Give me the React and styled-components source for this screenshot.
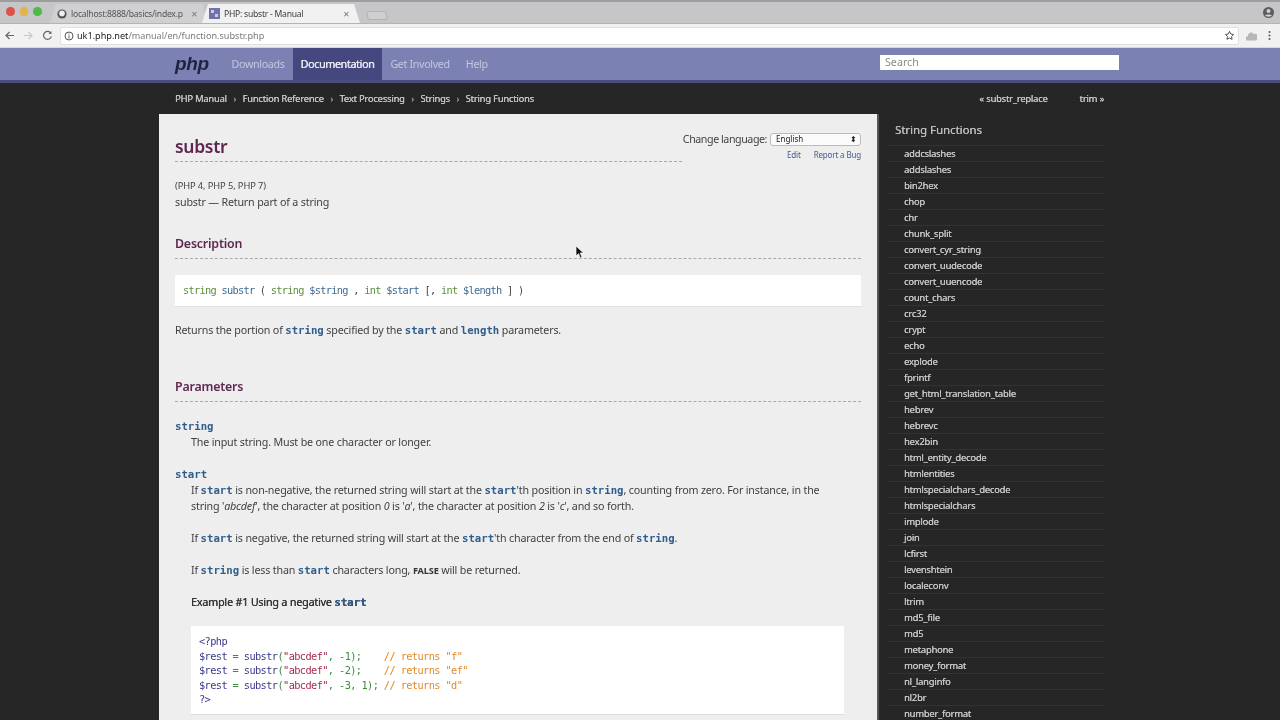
import React from "react";
import styled, { createGlobalStyle } from "styled-components";

const Global = createGlobalStyle`
  html, body { margin: 0; padding: 0; background: #262626; }
  body { width: 1280px; height: 720px; overflow: hidden; font-family: "Noto Sans", "Open Sans", sans-serif; }
  * { box-sizing: border-box; }
`;

const Page = styled.div`
  position: relative;
  width: 1280px;
  height: 720px;
  overflow: hidden;
  background: #262626;
  font-size: 10.7px;
  letter-spacing: -0.17px;
  filter: blur(0.35px);
`;

const TabStrip = styled.div`
  height: 24px;
  border-top: 2px solid #9d9da0;
  background: #c6c6c9;
  display: flex;
  align-items: flex-end;
  padding-left: 50px;
  border-bottom: 1px solid #b4b4b6;
`;
const Lights = styled.div`
  display: flex;
  gap: 5px;
  position: absolute;
  left: 6px;
  top: 7px;
  z-index: 3;
`;
const Light = styled.span`
  width: 8.500px;
  height: 8.500px;
  border-radius: 50%;
  background: ${(p) => p.$c};
`;
const Tab = styled.div`
  width: 158px;
  height: 19px;
  margin-right: -6px;
  padding: 0 10px 0 7px;
  display: flex;
  align-items: center;
  gap: 4px;
  font-size: 8.6px;
  letter-spacing: -0.25px;
  color: ${(p) => (p.$active ? "#3c3c3e" : "#555558")};
  background: ${(p) => (p.$active ? "#f1f1f2" : "#d0d0d2")};
  clip-path: polygon(0 100%, 6px 0, calc(100% - 6px) 0, 100% 100%);
  z-index: ${(p) => (p.$active ? 2 : 1)};
  white-space: nowrap;
  overflow: hidden;
`;
const TabTitle = styled.span`
  flex: 1;
  overflow: hidden;
`;
const TabClose = styled.span`
  font-size: 8px;
  color: #77777a;
`;
const NewTab = styled.div`
  width: 20px;
  height: 9px;
  margin: 0 0 3px 13px;
  background: #cfcfd1;
  border: 1px solid #b2b2b4;
  border-radius: 2px;
  transform: skewX(10deg);
`;
const Avatar = styled.div`
  margin-left: auto;
  margin-right: 6px;
  margin-bottom: 5px;
  display: flex;
`;

const Toolbar = styled.div`
  height: 24px;
  background: #f1f1f2;
  display: flex;
  align-items: center;
  padding: 0 9px 0 4px;
  border-bottom: 1px solid #d8d8da;
`;
const NavIcons = styled.div`
  display: flex;
  gap: 8px;
  margin-right: 7px;
`;
const Address = styled.div`
  flex: 1;
  height: 18px;
  background: #fff;
  border: 1px solid #e0e0e2;
  border-radius: 2px;
  display: flex;
  align-items: center;
  padding: 0 3px 0 3px;
  font-size: 9.1px;
  letter-spacing: 0;
  color: #7c7c7e;
  gap: 3px;
`;
const Host = styled.span`
  color: #242424;
`;
const AddressEnd = styled.span`
  margin-left: auto;
  display: flex;
`;
const ToolEnd = styled.div`
  display: flex;
  align-items: center;
  gap: 11px;
  margin-left: 7px;
`;

const NavBar = styled.nav`
  height: 35px;
  background: #7b82b3;
  border-bottom: 3px solid #4a4c80;
  display: flex;
  padding-left: 175px;
  align-items: stretch;
`;
const Logo = styled.div`
  width: 48.500px;
  font-family: "Liberation Sans", sans-serif;
  font-weight: 700;
  font-style: italic;
  font-size: 19px;
  color: #1f2240;
  display: flex;
  align-items: center;
  letter-spacing: -0.4px;
`;
const NavItem = styled.div`
  padding: 0 8px 1px;
  display: flex;
  align-items: center;
  font-size: 10.7px;
  letter-spacing: -0.33px;
  color: ${(p) => (p.$active ? "#e9e9ef" : "#c3c6de")};
  background: ${(p) => (p.$active ? "#44487f" : "transparent")};
  text-shadow: ${(p) => (p.$active ? "0.3px 0 0 #e9e9ef" : "none")};
`;
const SearchBox = styled.div`
  margin: 7px 161px 0 auto;
  width: 239px;
  height: 15px;
  background: #fff;
  color: #8a8a8a;
  font-size: 10.7px;
  letter-spacing: 0;
  padding: 0 5px 1px;
  display: flex;
  align-items: center;
`;

const Crumbs = styled.div`
  height: 31px;
  padding: 0 176px 1px 175px;
  display: flex;
  align-items: center;
  color: #c4c4c4;
  font-size: 9.4px;
  letter-spacing: -0.2px;
  text-shadow: 0.2px 0 0 #c4c4c4;
`;
const Sep = styled.span`
  margin: 0 6.500px;
  color: #8a8a8a;
`;
const Pager = styled.div`
  margin-left: auto;
  display: flex;
  gap: 32px;
`;

const Columns = styled.div`
  display: flex;
  padding-left: 159px;
  align-items: flex-start;
`;
const Main = styled.main`
  width: 720px;
  height: 620px;
  background: #eeeeee;
  padding: 0 16px;
  color: #3f3f3f;
  line-height: 16px;
  border-right: 2px solid #555;
`;
const TitleRow = styled.div`
  position: relative;
  height: 48px;
  width: 507px;
  border-bottom: 1px dashed #a8a8a8;
`;
const Title = styled.h1`
  margin: 0;
  padding-top: 19px;
  font-size: 17.5px;
  line-height: 26px;
  font-weight: 600;
  letter-spacing: -0.3px;
  color: #5e2750;
`;
const Lang = styled.div`
  position: absolute;
  right: -179px;
  top: 17px;
  display: flex;
  flex-direction: column;
  align-items: flex-end;
`;
const LangRow = styled.div`
  display: flex;
  align-items: center;
  gap: 3px;
  letter-spacing: -0.45px;
  color: #444;
`;
const Select = styled.div`
  width: 91px;
  height: 13px;
  background: #fafafa;
  border: 1px solid #bbb;
  border-radius: 3px;
  display: flex;
  justify-content: space-between;
  align-items: center;
  padding: 0 3px 0 5px;
  font-size: 8px;
  letter-spacing: 0;
  color: #222;
`;
const LangLinks = styled.div`
  display: flex;
  gap: 13px;
  font-size: 8px;
  letter-spacing: -0.15px;
  color: #3d5f8a;
`;
const Version = styled.div`
  margin-top: 16px;
  font-size: 9.3px;
  letter-spacing: -0.1px;
  color: #444;
`;
const Section = styled.h2`
  margin: ${(p) => p.$top}px 0 0;
  height: 26px;
  line-height: 21px;
  font-size: 12.4px;
  font-weight: 600;
  letter-spacing: -0.2px;
  color: #5e2750;
  border-bottom: 1px dashed #a8a8a8;
`;
const Signature = styled.div`
  margin-top: 16px;
  height: 32px;
  background: #fff;
  border-bottom: 1px solid #e2e2e2;
  padding: 0 8px;
  line-height: 31px;
  font-family: "DejaVu Sans Mono", monospace;
  font-size: 10.3px;
  letter-spacing: -0.71px;
  color: #444;
  white-space: pre;
`;
const T = styled.span`
  color: ${(p) => p.$c};
`;
const Para = styled.p`
  margin: ${(p) => p.$top || 0}px 0 0;
`;
const Code = styled.code`
  font-family: "DejaVu Sans Mono", monospace;
  font-size: 10.67px;
  letter-spacing: 0;
  line-height: 0;
  font-weight: 700;
  color: #2f5d8c;
`;
const Term = styled.div`
  margin-top: ${(p) => p.$top}px;
`;
const Indented = styled.div`
  padding-left: 16px;
`;
const Constant = styled.b`
  font-size: 9.2px;
  line-height: 0;
  font-weight: 700;
  color: #333;
`;
const ExampleTitle = styled.div`
  margin-top: 16px;
  text-shadow: 0.3px 0 0 #333;
  color: #333;
`;
const ExampleBox = styled.pre`
  margin: 16px 0 0;
  width: 653px;
  height: 89px;
  padding: 8px;
  background: #fff;
  border-bottom: 1px solid #ddd;
  font-family: "DejaVu Sans Mono", monospace;
  font-size: 10.3px;
  letter-spacing: -0.6px;
  line-height: 14.6px;
  color: #3a3a8c;
`;

const Side = styled.aside`
  width: 225px;
  padding: 7px 0 0 8px;
  color: #c4c4c4;
`;
const SideTitle = styled.div`
  height: 25px;
  padding-left: 8px;
  font-size: 11.4px;
  letter-spacing: 0;
  line-height: 18px;
  border-bottom: 1px solid #333;
  color: #bdbdbd;
  text-shadow: 0.2px 0 0 #bdbdbd;
`;
const SideItem = styled.div`
  height: 16px;
  line-height: 16px;
  padding-left: 17px;
  font-size: 9.4px;
  letter-spacing: -0.2px;
  text-shadow: 0.2px 0 0 #c4c4c4;
  border-bottom: 1px solid #333;
`;
const Cursor = styled.svg`
  position: absolute;
  left: 575px;
  top: 245px;
`;

const funcs = "addcslashes addslashes bin2hex chop chr chunk_split convert_cyr_string convert_uudecode convert_uuencode count_chars crc32 crypt echo explode fprintf get_html_translation_table hebrev hebrevc hex2bin html_entity_decode htmlentities htmlspecialchars_decode htmlspecialchars implode join lcfirst levenshtein localeconv ltrim md5_file md5 metaphone money_format nl_langinfo nl2br number_format".split(" ");

const GREEN = "#5c8f3a";
const BLUE = "#3d6a94";
const RED = "#a32c4c";
const ORANGE = "#e08a2c";

function CodeLine({ args, pad }) {
  return (
    <>
      <T $c="#3a3a8c">$rest </T>
      <T $c="#3a8c3a">= </T>
      <T $c="#3a3a8c">substr</T>
      <T $c="#3a8c3a">(</T>
      <T $c={RED}>"abcdef"</T>
      <T $c="#3a8c3a">, {args});{pad}</T>
      <T $c={ORANGE}>{"// returns "}</T>
    </>
  );
}

export default function App() {
  return (
    <Page>
      <Global />
      <Lights>
        <Light $c="#e0514a" />
        <Light $c="#e3b24a" />
        <Light $c="#4fb94a" />
      </Lights>
      <TabStrip>
        <Tab>
          <svg width="10" height="10" viewBox="0 0 10 10"><circle cx="5" cy="5" r="4.6" fill="#555" /><circle cx="5" cy="4.4" r="2.8" fill="#eee" /></svg>
          <TabTitle>localhost:8888/basics/index.p</TabTitle>
          <TabClose>✕</TabClose>
        </Tab>
        <Tab $active>
          <svg width="11" height="11" viewBox="0 0 11 11"><rect width="11" height="11" fill="#6f72a8" /><rect x="2" y="2" width="3" height="3" fill="#c9cbe0" /><rect x="6" y="6" width="3" height="3" fill="#c9cbe0" /></svg>
          <TabTitle>PHP: substr - Manual</TabTitle>
          <TabClose>✕</TabClose>
        </Tab>
        <NewTab />
        <Avatar>
          <svg width="11" height="11" viewBox="0 0 11 11"><circle cx="5.5" cy="5.5" r="5.5" fill="#5c5c60" /><circle cx="5.5" cy="4" r="2" fill="#d0d0d2" /><path d="M2 8.6c1-1.5 6-1.5 7 0-1 1.4-6 1.4-7 0z" fill="#d0d0d2" /></svg>
        </Avatar>
      </TabStrip>
      <Toolbar>
        <NavIcons>
          <svg width="11" height="11" viewBox="0 0 11 11" fill="none" stroke="#666" strokeWidth="1.2"><path d="M10 5.5H2M5.5 2L2 5.5 5.5 9" /></svg>
          <svg width="11" height="11" viewBox="0 0 11 11" fill="none" stroke="#c8c8ca" strokeWidth="1.2"><path d="M1 5.5h8M5.5 2L9 5.5 5.5 9" /></svg>
          <svg width="11" height="11" viewBox="0 0 11 11" fill="none" stroke="#666" strokeWidth="1.2"><path d="M9.4 6.4A4 4 0 1 1 8.4 2.6" /><path d="M9.5 1v3h-3" fill="#666" stroke="none" /></svg>
        </NavIcons>
        <Address>
          <svg width="10" height="10" viewBox="0 0 10 10" fill="none" stroke="#555"><circle cx="5" cy="5" r="4" /><path d="M5 4.5V7.5M5 2.6v1" /></svg>
          <span><Host>uk1.php.net</Host>/manual/en/function.substr.php</span>
          <AddressEnd>
            <svg width="11" height="11" viewBox="0 0 24 24" fill="none" stroke="#444" strokeWidth="2"><path d="M12 3l2.8 5.8 6.2.9-4.500 4.400 1.100 6.300L12 17.400 6.400 20.400l1.100-6.300L3 9.700l6.200-.9z" /></svg>
          </AddressEnd>
        </Address>
        <ToolEnd>
          <svg width="11" height="10" viewBox="0 0 11 10"><path d="M1 9.500a2 2 0 0 1 0-4l1-.5a3 3 0 0 1 5.500-2 3.300 3.300 0 0 1 2.500 6.500z" fill="#b8b8ba" /></svg>
          <svg width="3" height="11" viewBox="0 0 3 11" fill="#555"><circle cx="1.500" cy="2" r="1" /><circle cx="1.500" cy="5.500" r="1" /><circle cx="1.500" cy="9" r="1" /></svg>
        </ToolEnd>
      </Toolbar>
      <NavBar>
        <Logo>php</Logo>
        <NavItem>Downloads</NavItem>
        <NavItem $active>Documentation</NavItem>
        <NavItem>Get Involved</NavItem>
        <NavItem>Help</NavItem>
        <SearchBox>Search</SearchBox>
      </NavBar>
      <Crumbs>
        PHP Manual<Sep>›</Sep>Function Reference<Sep>›</Sep>Text Processing<Sep>›</Sep>Strings<Sep>›</Sep>String Functions
        <Pager><span>« substr_replace</span><span>trim »</span></Pager>
      </Crumbs>
      <Columns>
        <Main>
          <TitleRow>
            <Title>substr</Title>
            <Lang>
              <LangRow>Change language: <Select>English<span>⬍</span></Select></LangRow>
              <LangLinks><span>Edit</span><span>Report a Bug</span></LangLinks>
            </Lang>
          </TitleRow>
          <Version>(PHP 4, PHP 5, PHP 7)</Version>
          <div>substr — Return part of a string</div>
          <Section $top={23}>Description</Section>
          <Signature>
            <T $c={GREEN}>string</T> <T $c={BLUE}>substr</T> ( <T $c={GREEN}>string</T> <T $c={BLUE}>$string</T> , <T $c={GREEN}>int</T> <T $c={BLUE}>$start</T> [, <T $c={GREEN}>int</T> <T $c={BLUE}>$length</T> ] )
          </Signature>
          <Para $top={15}>Returns the portion of <Code>string</Code> specified by the <Code>start</Code> and <Code>length</Code> parameters.</Para>
          <Section $top={38}>Parameters</Section>
          <Term $top={16}><Code>string</Code></Term>
          <Indented>The input string. Must be one character or longer.</Indented>
          <Term $top={16}><Code>start</Code></Term>
          <Indented>
            <div>If <Code>start</Code> is non-negative, the returned string will start at the <Code>start</Code>'th position in <Code>string</Code>, counting from zero. For instance, in the</div>
            <div>string '<i>abcdef</i>', the character at position <i>0</i> is '<i>a</i>', the character at position <i>2</i> is '<i>c</i>', and so forth.</div>
            <Para $top={16}>If <Code>start</Code> is negative, the returned string will start at the <Code>start</Code>'th character from the end of <Code>string</Code>.</Para>
            <Para $top={16}>If <Code>string</Code> is less than <Code>start</Code> characters long, <Constant>FALSE</Constant> will be returned.</Para>
            <ExampleTitle>Example #1 Using a negative <Code>start</Code></ExampleTitle>
            <ExampleBox>
              {"<?php\n"}
              <CodeLine args="-1" pad="    " /><T $c={ORANGE}>"f"</T>{"\n"}
              <CodeLine args="-2" pad="    " /><T $c={ORANGE}>"ef"</T>{"\n"}
              <CodeLine args="-3, 1" pad=" " /><T $c={ORANGE}>"d"</T>{"\n"}
              {"?>"}
            </ExampleBox>
          </Indented>
        </Main>
        <Side>
          <SideTitle>String Functions</SideTitle>
          {funcs.map((f) => <SideItem key={f}>{f}</SideItem>)}
        </Side>
      </Columns>
      <Cursor width="10" height="14" viewBox="0 0 10 14"><path d="M1 1v10l2.500-2.300L5.300 13l1.700-.8-1.800-4.200H8.500z" fill="#111" stroke="#fff" strokeWidth="0.7" /></Cursor>
    </Page>
  );
}
